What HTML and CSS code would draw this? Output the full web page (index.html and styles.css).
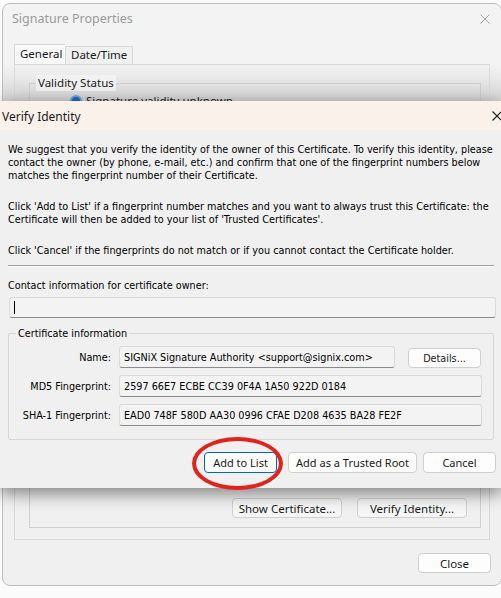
FILE: index.html
```html
<!DOCTYPE html>
<html>
<head>
<meta charset="utf-8">
<link rel="stylesheet" href="styles.css">
</head>
<body>
<div class="desktop">
  <div class="backwin">
    <div class="bw-title">
      <span class="bw-title-text">Signature Properties</span>
      <svg class="bw-close" width="10" height="10" viewBox="0 0 10 10"><path d="M0.5 0.5 L9.5 9.5 M9.5 0.5 L0.5 9.5" stroke="#a0a0a0" stroke-width="1" fill="none"/></svg>
    </div>
    <div class="tabs">
      <div class="tab tab-active">General</div>
      <div class="tab">Date/Time</div>
    </div>
    <div class="pane">
      <div class="groupbox">
        <span class="gb-label">Validity Status</span>
        <div class="radio-row"><span class="radio"></span><span>Signature validity unknown</span></div>
        <div class="bw-buttons">
          <div class="btn bw-btn">Show Certificate...</div>
          <div class="btn bw-btn">Verify Identity...</div>
        </div>
      </div>
    </div>
    <div class="bw-close-row">
      <div class="btn close-btn">Close</div>
    </div>
  </div>

  <div class="dialog">
    <div class="dlg-title">
      <span>Verify Identity</span>
      <svg class="dlg-close" width="10" height="10" viewBox="0 0 10 10"><path d="M0.5 0.5 L9.5 9.5 M9.5 0.5 L0.5 9.5" stroke="#1a1a1a" stroke-width="1.1" fill="none"/></svg>
    </div>
    <div class="dlg-body">
      <p class="para">We suggest that you verify the identity of the owner of this Certificate. To verify this identity, please<br>contact the owner (by phone, e-mail, etc.) and confirm that one of the fingerprint numbers below<br>matches the fingerprint number of their Certificate.</p>
      <p class="para">Click 'Add to List' if a fingerprint number matches and you want to always trust this Certificate: the<br>Certificate will then be added to your list of 'Trusted Certificates'.</p>
      <p class="para last">Click 'Cancel' if the fingerprints do not match or if you cannot contact the Certificate holder.</p>
      <div class="sep"></div>
      <div class="contact-label">Contact information for certificate owner:</div>
      <div class="field contact-field"><span class="caret"></span></div>
      <div class="certgroup">
        <span class="cg-label">Certificate information</span>
        <div class="cg-row">
          <span class="cg-key">Name:</span>
          <div class="field name-field">SIGNiX Signature Authority &lt;support@signix.com&gt;</div>
          <div class="btn details-btn">Details...</div>
        </div>
        <div class="cg-row">
          <span class="cg-key">MD5 Fingerprint:</span>
          <div class="field fp-field">2597 66E7 ECBE CC39 0F4A 1A50 922D 0184</div>
        </div>
        <div class="cg-row">
          <span class="cg-key">SHA-1 Fingerprint:</span>
          <div class="field fp-field">EAD0 748F 580D AA30 0996 CFAE D208 4635 BA28 FE2F</div>
        </div>
      </div>
      <div class="dlg-buttons">
        <div class="btn dlg-btn default-btn">Add to List</div>
        <div class="btn dlg-btn root-btn">Add as a Trusted Root</div>
        <div class="btn dlg-btn cancel-btn">Cancel</div>
      </div>
    </div>
  </div>

  <div class="ellipse"></div>
</div>
</body>
</html>
```

FILE: styles.css
```css
* { box-sizing: border-box; }
html, body { margin: 0; padding: 0; }
body {
  width: 501px;
  height: 598px;
  overflow: hidden;
  background: #fbfbfb;
  font-family: "Noto Sans", "Open Sans", sans-serif;
  color: #1a1a1a;
}
.desktop {
  position: relative;
  width: 501px;
  height: 598px;
}

/* ---------- back window ---------- */
.backwin {
  position: absolute;
  left: 2px;
  top: 3px;
  width: 500px;
  height: 583px;
  border: 1px solid #bdbdbd;
  border-radius: 8px;
  background: linear-gradient(#f3f3f3 0, #f3f3f3 60px, #d9d9d9 98px, #f0f0f0 98px, #f0f0f0 100%);
  font-size: 12px;
  display: flex;
  flex-direction: column;
}
.bw-title {
  height: 40px;
  padding: 6px 0 0 9px;
  display: flex;
  justify-content: space-between;
  color: #9a9a9a;
  font-size: 12.5px;
  line-height: 17px;
}
.bw-close { margin: 4px 11px 0 0; }
.tabs {
  display: flex;
  align-items: flex-end;
  margin-left: 11px;
  height: 20px;
  font-size: 11.5px;
}
.tab {
  height: 18px;
  padding: 0 5px;
  border: 1px solid #d9d9d9;
  border-bottom: none;
  background: #f0f0f0;
  line-height: 16px;
}
.tab-active {
  height: 20px;
  width: 51px;
  background: #f9f9f9;
  line-height: 16px;
  padding-top: 1px;
  border-right: none;
}
.pane {
  margin: 0 0 0 11px;
  width: 476px;
  height: 476px;
  flex: none;
  border: 1px solid #d9d9d9;
  padding: 18px 8px 11px 14px;
  display: flex;
}
.groupbox {
  position: relative;
  flex: 1;
  border: 1px solid #d0d0d0;
  display: flex;
  flex-direction: column;
  justify-content: space-between;
  padding: 9px 13px 9px 40px;
}
.gb-label {
  position: absolute;
  left: 6px;
  top: -9px;
  padding: 0 2px;
  background: #f3f3f3;
  font-size: 11.5px;
  line-height: 16px;
}
.radio-row {
  display: flex;
  align-items: center;
  gap: 4px;
  font-size: 11.5px;
}
.radio {
  width: 12px;
  height: 12px;
  border-radius: 50%;
  background: #1c6fc1;
  border: 2px solid #6aa8e0;
}
.bw-buttons {
  display: flex;
  justify-content: flex-end;
  gap: 15px;
}
.btn {
  height: 20px;
  flex: none;
  border: 1px solid #cfcfcf;
  border-radius: 4px;
  background: #fdfdfd;
  display: flex;
  align-items: center;
  justify-content: center;
  font-size: 11.5px;
  color: #1a1a1a;
  white-space: nowrap;
}
.bw-btn { width: 110px; background: #f6f6f6; }
.bw-close-row {
  display: flex;
  justify-content: flex-end;
  padding: 13px 10px 0 0;
}
.close-btn { width: 73px; }

/* ---------- dialog ---------- */
.dialog {
  position: absolute;
  left: 0;
  top: 101px;
  width: 501px;
  height: 387px;
  background: #f0f0f0;
  box-shadow: 0 6px 14px rgba(0,0,0,0.35), 0 0 24px rgba(0,0,0,0.18);
  display: flex;
  flex-direction: column;
}
.dlg-title {
  height: 30px;
  flex: none;
  background: #f9f1ea;
  display: flex;
  align-items: center;
  justify-content: space-between;
  padding: 0 0 0 2px;
  font-size: 12px;
  color: #1a1a1a;
}
.dlg-close { margin-right: -1px; }
.dlg-body {
  padding: 12px 5px 0 8px;
  font-family: "DejaVu Sans Condensed", "DejaVu Sans", sans-serif;
  font-size: 10.75px;
  color: #000;
}
.para {
  margin: 0 0 18px 0;
  line-height: 13px;
  white-space: nowrap;
}
.para.last { margin-bottom: 8px; }
.sep {
  width: 486px;
  height: 2px;
  border-top: 1px solid #a0a0a0;
  border-bottom: 1px solid #ffffff;
}
.contact-label {
  margin-top: 12px;
  line-height: 13px;
}
.field {
  height: 22px;
  flex: none;
  border: 1px solid #dadada;
  border-bottom-color: #8a8a8a;
  border-radius: 3px;
  background: #f3f3f3;
  display: flex;
  align-items: center;
  padding-left: 4px;
  white-space: nowrap;
  overflow: hidden;
}
.contact-field {
  margin: 5px 0 0 1px;
  width: 487px;
  height: 21px;
}
.caret {
  width: 1px;
  height: 13px;
  background: #000;
}
.certgroup {
  position: relative;
  margin-top: 15px;
  width: 486px;
  height: 107px;
  border: 1px solid #d6d6d6;
  border-radius: 2px;
  padding: 12px 0 0 0;
  display: flex;
  flex-direction: column;
  gap: 7px;
}
.cg-label {
  position: absolute;
  left: 7px;
  top: -7px;
  padding: 0 2px;
  background: #f0f0f0;
  line-height: 13px;
}
.cg-row {
  display: flex;
  align-items: center;
  height: 22px;
}
.cg-key {
  width: 110px;
  text-align: right;
  padding-right: 8px;
  flex: none;
  white-space: nowrap;
}
.name-field { width: 276px; }
.fp-field { width: 363px; }
.details-btn {
  width: 73px;
  margin-left: 13px;
  font-family: "DejaVu Sans Condensed", "DejaVu Sans", sans-serif;
  font-size: 10.75px;
  margin-top: 2px;
}
.dlg-buttons {
  display: flex;
  justify-content: flex-end;
  margin-top: 12px;
  gap: 6px;
}
.dlg-btn {
  height: 21px;
  font-family: "Noto Sans", "Open Sans", sans-serif;
  font-size: 11px;
}
.default-btn {
  width: 73px;
  margin-right: 5px;
  border: 1px solid #0067c0;
  box-shadow: inset 0 0 0 1px #ffffff;
}
.root-btn { width: 129px; }
.cancel-btn { width: 73px; }

.ellipse {
  position: absolute;
  left: 192px;
  top: 437px;
  width: 91px;
  height: 53px;
  border: 4px solid #e2231c;
  border-radius: 50%;
}
```
